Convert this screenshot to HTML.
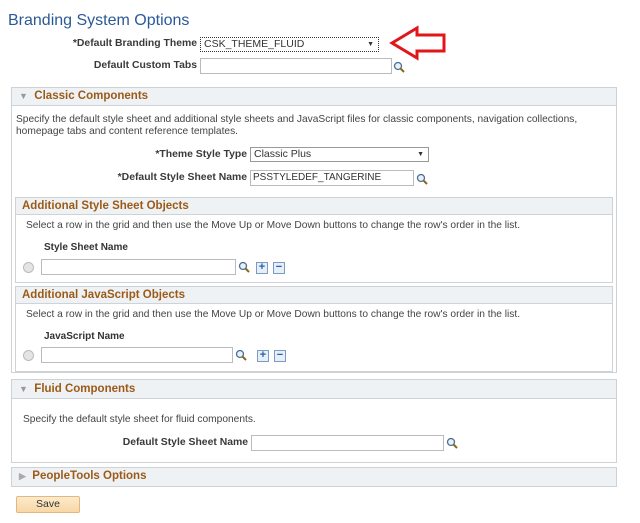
<!DOCTYPE html>
<html><head><style>
body{margin:0;width:640px;height:523px;background:#fff;font-family:"Liberation Sans",Arial,sans-serif;font-size:11px;color:#333;position:relative;overflow:hidden}
.a{position:absolute;white-space:nowrap}
.lbl{position:absolute;font-weight:bold;color:#3a3a3a;text-align:right;font-size:10.4px;white-space:nowrap}
.inp{position:absolute;border:1px solid #bbb;background:#fff;box-sizing:border-box}
.box{position:absolute;border:1px solid #d0d3d6;box-sizing:border-box;background:#fff}
.hdr{position:absolute;left:0;right:0;top:0;background:#eff2f4;border-bottom:1px solid #d0d3d6;color:#9c5a17;font-weight:bold;font-size:11.5px;box-sizing:border-box;padding-left:7px;white-space:nowrap}
.mag{position:absolute;width:12px;height:12px}
.btn{position:absolute;width:12px;height:12px;border:1px solid #7a9cc4;background:#e6eef8;box-sizing:border-box;color:#2a5ea4;font-weight:bold;font-size:11px;line-height:9px;text-align:center}
.radio{position:absolute;width:11px;height:11px;border-radius:50%;border:1px solid #bbb;background:#e4e4e4;box-sizing:border-box}
.sel{position:absolute;border:1px solid #999;box-sizing:border-box;background:#fff;font-size:10.5px;padding-left:3px;line-height:13px}
.sel:after{content:"▼";position:absolute;right:4px;top:0;font-size:7px}
.t{font-size:10.2px;color:#444}
</style></head><body>
<div class="a" style="left:8px;top:12px;font-size:16px;color:#2a5a96">Branding System Options</div>

<div class="lbl" style="right:443px;top:38px">*Default Branding Theme</div>
<div class="sel" style="left:200px;top:37px;width:179px;height:15px;border:1px dotted #333">CSK_THEME_FLUID</div>
<svg class="a" style="left:388px;top:25px" width="60" height="36"><path d="M4 18 L29 3 L29 10 L56 10 L56 26 L29 26 L29 33 Z" fill="none" stroke="#e0161b" stroke-width="3"/></svg>

<div class="lbl" style="right:443px;top:60px">Default Custom Tabs</div>
<div class="inp" style="left:200px;top:58px;width:192px;height:16px"></div>
<svg class="mag" style="left:393px;top:61px" viewBox="0 0 12 12"><circle cx="5" cy="5" r="3.5" fill="#e8f0f8" stroke="#4a6f96" stroke-width="1.3"/><path d="M7.5 7.5 L11 11" stroke="#8a6a1a" stroke-width="2"/></svg>

<div class="box" style="left:11px;top:87px;width:606px;height:286px">
 <div class="hdr" style="height:18px;line-height:17px"><span style="color:#999;font-size:9px">▼</span>&nbsp; Classic Components</div>
</div>
<div class="a t" style="left:16px;top:114px;line-height:12px">Specify the default style sheet and additional style sheets and JavaScript files for classic components, navigation collections,<br>homepage tabs and content reference templates.</div>
<div class="lbl" style="right:393px;top:149px">*Theme Style Type</div>
<div class="sel" style="left:250px;top:147px;width:179px;height:15px">Classic Plus</div>
<div class="lbl" style="right:393px;top:172px">*Default Style Sheet Name</div>
<div class="inp" style="left:250px;top:170px;width:164px;height:16px;font-size:10px;padding-left:2px;line-height:14px">PSSTYLEDEF_TANGERINE</div>
<svg class="mag" style="left:416px;top:173px" viewBox="0 0 12 12"><circle cx="5" cy="5" r="3.5" fill="#e8f0f8" stroke="#4a6f96" stroke-width="1.3"/><path d="M7.5 7.5 L11 11" stroke="#8a6a1a" stroke-width="2"/></svg>

<div class="box" style="left:15px;top:197px;width:598px;height:86px">
 <div class="hdr" style="height:17px;line-height:16px;padding-left:6px">Additional Style Sheet Objects</div>
</div>
<div class="a t" style="left:26px;top:220px">Select a row in the grid and then use the Move Up or Move Down buttons to change the row's order in the list.</div>
<div class="a" style="left:44px;top:242px;font-weight:bold;font-size:10px">Style Sheet Name</div>
<div class="radio" style="left:23px;top:262px"></div>
<div class="inp" style="left:41px;top:259px;width:195px;height:16px"></div>
<svg class="mag" style="left:238px;top:261px" viewBox="0 0 12 12"><circle cx="5" cy="5" r="3.5" fill="#e8f0f8" stroke="#4a6f96" stroke-width="1.3"/><path d="M7.5 7.5 L11 11" stroke="#8a6a1a" stroke-width="2"/></svg>
<div class="btn" style="left:256px;top:262px">+</div>
<div class="btn" style="left:273px;top:262px">−</div>

<div class="box" style="left:15px;top:286px;width:598px;height:86px">
 <div class="hdr" style="height:17px;line-height:16px;padding-left:6px">Additional JavaScript Objects</div>
</div>
<div class="a t" style="left:26px;top:309px">Select a row in the grid and then use the Move Up or Move Down buttons to change the row's order in the list.</div>
<div class="a" style="left:44px;top:331px;font-weight:bold;font-size:10px">JavaScript Name</div>
<div class="radio" style="left:23px;top:350px"></div>
<div class="inp" style="left:41px;top:347px;width:192px;height:16px"></div>
<svg class="mag" style="left:235px;top:349px" viewBox="0 0 12 12"><circle cx="5" cy="5" r="3.5" fill="#e8f0f8" stroke="#4a6f96" stroke-width="1.3"/><path d="M7.5 7.5 L11 11" stroke="#8a6a1a" stroke-width="2"/></svg>
<div class="btn" style="left:257px;top:350px">+</div>
<div class="btn" style="left:274px;top:350px">−</div>

<div class="box" style="left:11px;top:379px;width:606px;height:84px">
 <div class="hdr" style="height:19px;line-height:18px"><span style="color:#999;font-size:9px">▼</span>&nbsp; Fluid Components</div>
</div>
<div class="a t" style="left:23px;top:414px">Specify the default style sheet for fluid components.</div>
<div class="lbl" style="right:392px;top:437px">Default Style Sheet Name</div>
<div class="inp" style="left:251px;top:435px;width:193px;height:16px"></div>
<svg class="mag" style="left:446px;top:437px" viewBox="0 0 12 12"><circle cx="5" cy="5" r="3.5" fill="#e8f0f8" stroke="#4a6f96" stroke-width="1.3"/><path d="M7.5 7.5 L11 11" stroke="#8a6a1a" stroke-width="2"/></svg>

<div class="box" style="left:11px;top:467px;width:606px;height:20px;background:#eff2f4">
 <div class="hdr" style="height:18px;line-height:17px;border:none"><span style="color:#aaa;font-size:9px">▶</span>&nbsp; PeopleTools Options</div>
</div>

<div class="a" style="left:16px;top:496px;width:64px;height:17px;box-sizing:border-box;border:1px solid #e0b880;border-radius:2px;background:linear-gradient(#fdeacc,#f8d7a4);text-align:center;line-height:15px;font-size:10.5px;color:#333">Save</div>
</body></html>
